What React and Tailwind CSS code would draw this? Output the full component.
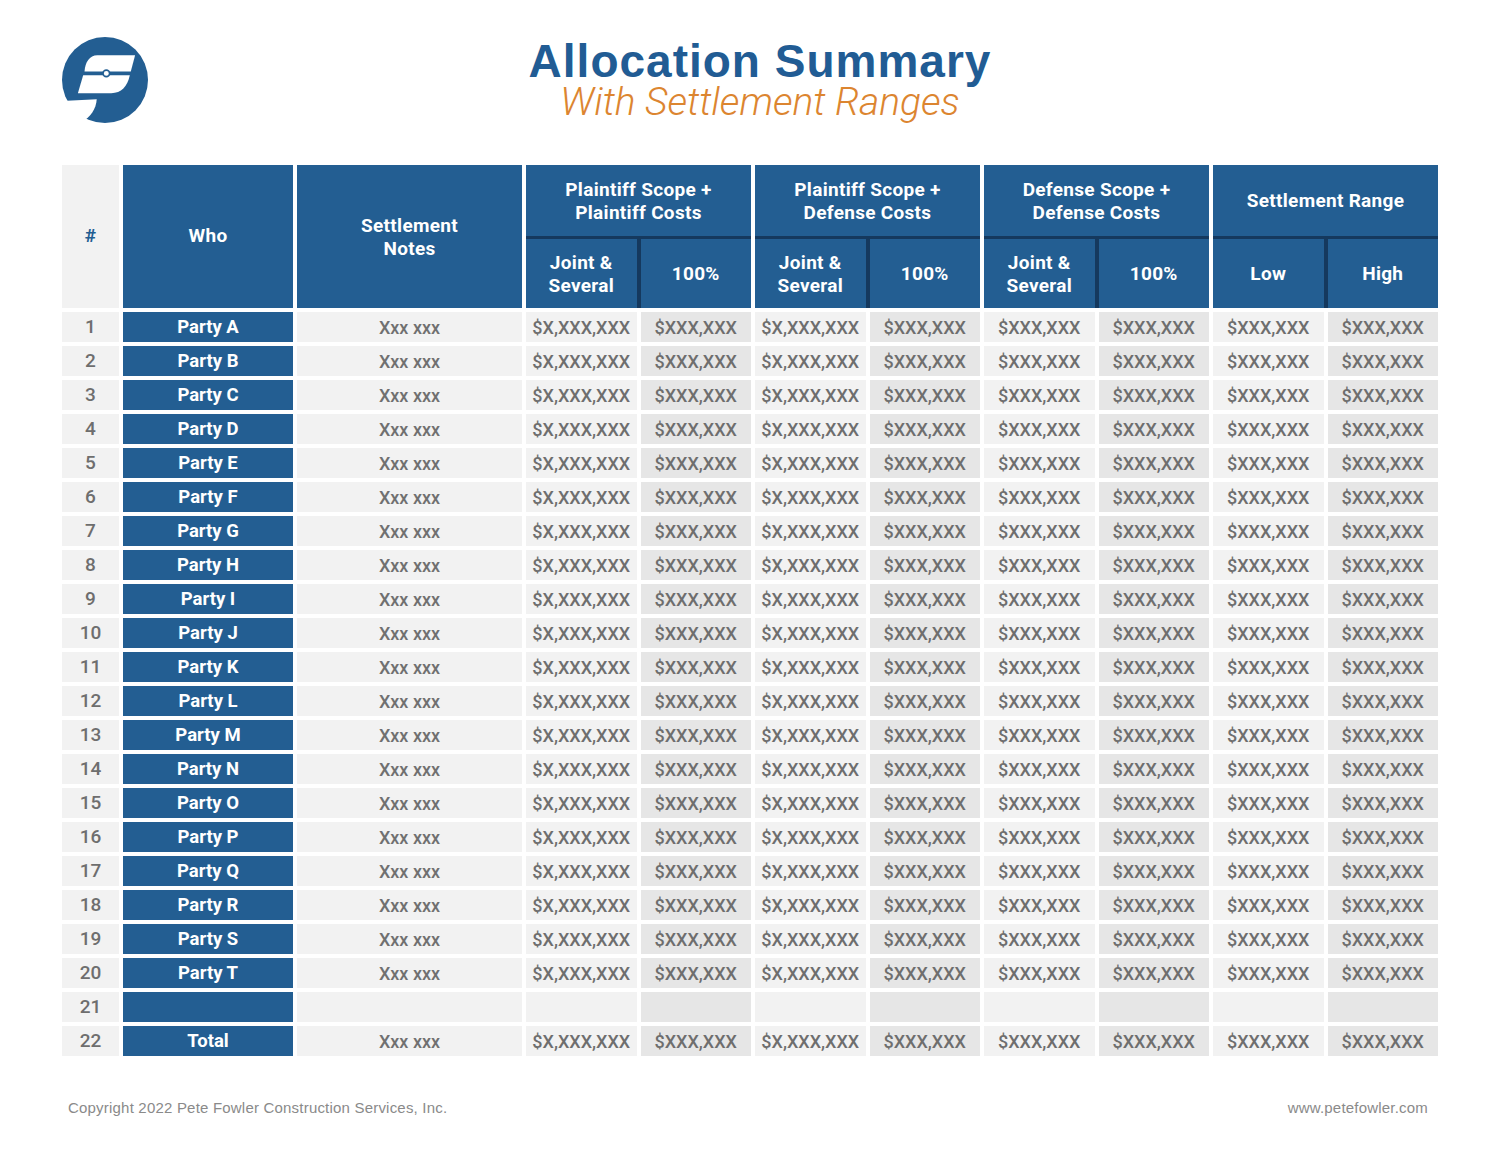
import React from 'react';

const parties = 'ABCDEFGHIJKLMNOPQRST'.split('').map((l) => `Party ${l}`);

const rows = [
  ...parties.map((who, i) => ({ n: i + 1, who, filled: true })),
  { n: 21, who: '', filled: false },
  { n: 22, who: 'Total', filled: true },
];

// value text + background for the 8 money columns
const moneyCols = [
  { v: '$X,XXX,XXX', bg: 'bg-[#f2f2f2]' },
  { v: '$XXX,XXX', bg: 'bg-[#e6e6e6]' },
  { v: '$X,XXX,XXX', bg: 'bg-[#f2f2f2]' },
  { v: '$XXX,XXX', bg: 'bg-[#e6e6e6]' },
  { v: '$XXX,XXX', bg: 'bg-[#f2f2f2]' },
  { v: '$XXX,XXX', bg: 'bg-[#e6e6e6]' },
  { v: '$XXX,XXX', bg: 'bg-[#f2f2f2]' },
  { v: '$XXX,XXX', bg: 'bg-[#e6e6e6]' },
];

const groups = [
  { title: ['Plaintiff Scope +', 'Plaintiff Costs'], subs: [['Joint &', 'Several'], ['100%']] },
  { title: ['Plaintiff Scope +', 'Defense Costs'], subs: [['Joint &', 'Several'], ['100%']] },
  { title: ['Defense Scope +', 'Defense Costs'], subs: [['Joint &', 'Several'], ['100%']] },
  { title: ['Settlement Range'], subs: [['Low'], ['High']] },
];

function Logo() {
  return (
    <svg width="86" height="86" viewBox="35 50 260 260">
      <circle cx="165" cy="180" r="130" fill="#235e92" />
      {/* lower-left swoosh cut */}
      <path d="M20 244 L140 238 C138 268 122 290 96 306 L20 330 Z" fill="#fff" />
      {/* upper bar */}
      <path d="M142 105 L256 105 L243 154 L103 154 C105 126 118 105 142 105 Z" fill="#fff" />
      {/* lower bar */}
      <path d="M99 166 L240 166 C233 200 214 220 184 220 L83 220 Z" fill="#fff" />
      <circle cx="169" cy="160" r="10" fill="#fff" stroke="#235e92" strokeWidth="5" />
    </svg>
  );
}

function Lines({ lines }) {
  return (
    <div className="text-center leading-[23px]">
      {lines.map((l, i) => (
        <div key={i}>{l}</div>
      ))}
    </div>
  );
}

export default function App() {
  return (
    <div className="w-[1500px] h-[1159px] bg-white flex flex-col font-['Liberation_Sans',Arial,sans-serif]">
      {/* Page header */}
      <div className="grid grid-cols-[86px_1fr_86px] px-[62px] pt-[37px] h-[165px]">
        <div>
          <Logo />
        </div>
        <div className="pl-[20px] pt-[2px] text-center">
          <div className="text-[46px] leading-[44px] font-bold tracking-[1px] text-[#215c94]">
            Allocation Summary
          </div>
          <div className="text-[39px] leading-[38px] italic font-light text-[#dc8530] font-['Roboto','Liberation_Sans',sans-serif]">
            With Settlement Ranges
          </div>
        </div>
        <div />
      </div>

      {/* Table */}
      <div className="mx-[62px] w-[1376px] font-['Roboto','Liberation_Sans',sans-serif]">
        {/* Header */}
        <div className="grid grid-cols-[57px_170px_225px_repeat(8,1fr)] gap-x-[4px] h-[143px] text-white font-bold text-[19px] tracking-[0.3px]">
          <div className="bg-[#f2f2f2] text-[#235e92] flex items-center justify-center">#</div>
          <div className="bg-[#235e92] flex items-center justify-center">Who</div>
          <div className="bg-[#235e92] flex items-center justify-center">
            <Lines lines={['Settlement', 'Notes']} />
          </div>
          {groups.map((g, gi) => (
            <div key={gi} className="col-span-2 bg-[#15395e] flex flex-col gap-y-[3px]">
              <div className="h-[71px] bg-[#235e92] flex items-center justify-center">
                <Lines lines={g.title} />
              </div>
              <div className="flex-1 grid grid-cols-2 gap-x-[4px]">
                {g.subs.map((s, si) => (
                  <div key={si} className="bg-[#235e92] flex items-center justify-center">
                    <Lines lines={s} />
                  </div>
                ))}
              </div>
            </div>
          ))}
        </div>

        {/* Body */}
        <div className="mt-[4px] flex flex-col gap-y-[4px] text-[18px]">
          {rows.map((r) => (
            <div
              key={r.n}
              className="grid grid-cols-[57px_170px_225px_repeat(8,1fr)] gap-x-[4px] h-[30px]"
            >
              <div className="bg-[#f2f2f2] text-[#6e6e6e] font-medium text-[19px] flex items-center justify-center">
                {r.n}
              </div>
              <div className="bg-[#235e92] text-white font-bold text-[18.5px] pt-[2px] flex items-center justify-center">
                {r.who}
              </div>
              <div className="bg-[#f2f2f2] text-[#707070] font-medium flex items-center justify-center">
                {r.filled ? 'Xxx xxx' : ''}
              </div>
              {moneyCols.map((c, ci) => (
                <div
                  key={ci}
                  className={`${c.bg} text-[#6e6e6e] font-medium flex items-center justify-center`}
                >
                  {r.filled ? c.v : ''}
                </div>
              ))}
            </div>
          ))}
        </div>
      </div>

      {/* Footer */}
      <div className="mt-[42px] pl-[68px] pr-[72px] flex justify-between text-[15px] leading-[20px] text-[#8a8a8a] tracking-[0.2px]">
        <span>Copyright 2022 Pete Fowler Construction Services, Inc.</span>
        <span>www.petefowler.com</span>
      </div>
    </div>
  );
}
